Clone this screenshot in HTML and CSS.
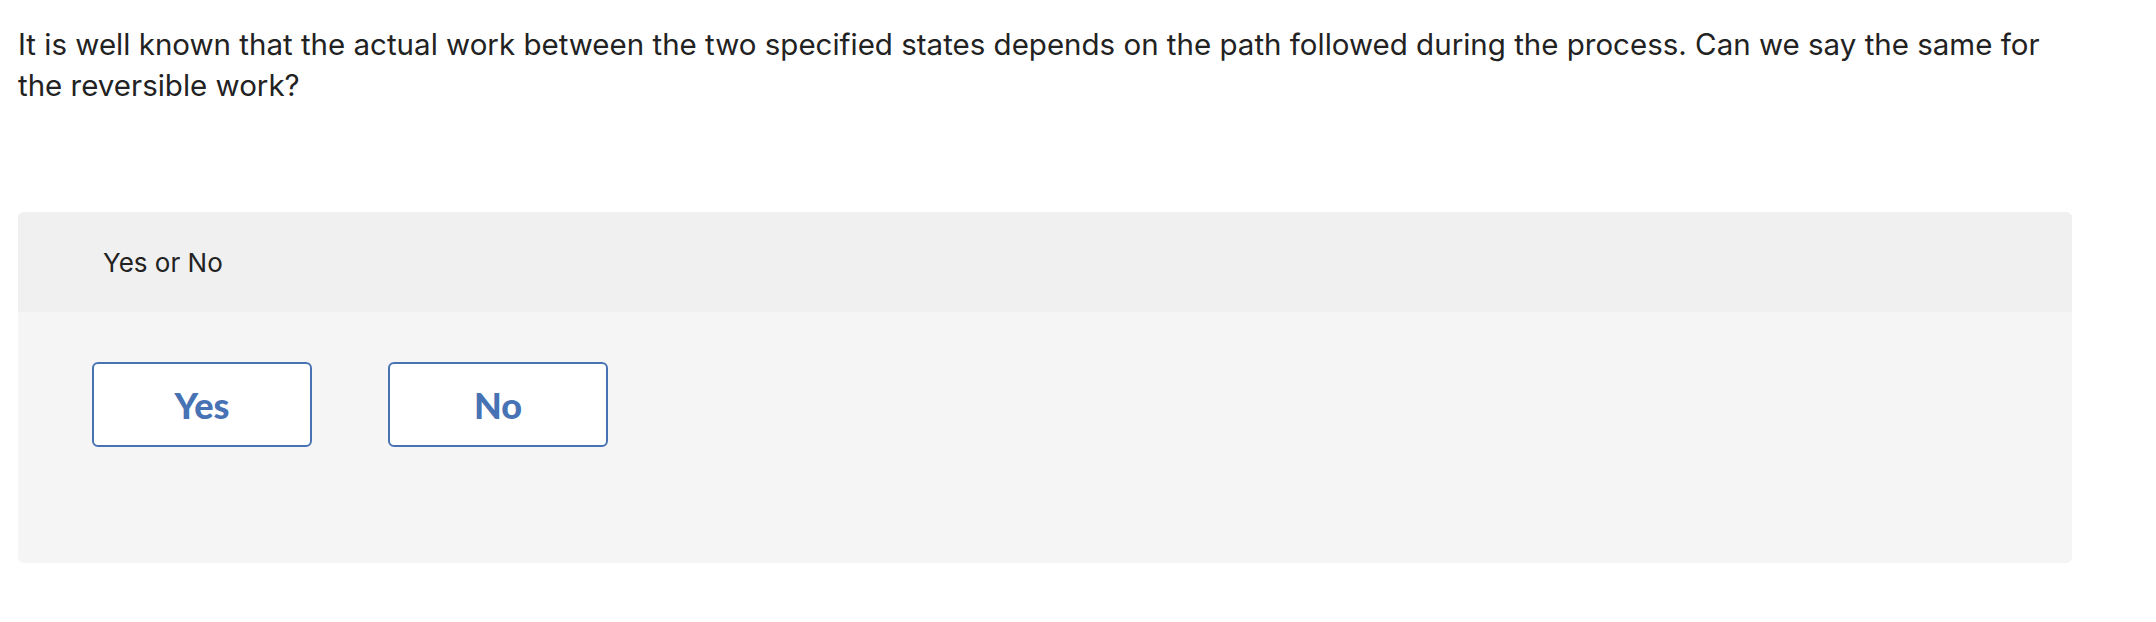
FILE: index.html
```html
<!DOCTYPE html>
<html>
<head>
  <meta name="viewport" content="width=device-width, initial-scale=1">
  <link rel="stylesheet" href="styles.css">
</head>
<body>

<div class="question">
  <p>It is well known that the actual work between the two specified states depends on the path followed during the process. Can we say the same for the reversible work?</p>
</div>

<div class="answer-box">
  <div class="answer-head">Yes or No</div>
  <div class="answer-body">
    <button class="choice-btn">Yes</button>
    <button class="choice-btn">No</button>
  </div>
</div>

</body>
</html>
```

FILE: styles.css
```css
body {
  font-family: Inter, Lato, sans-serif;
  margin: 0;
  padding: 24px 84px 0 18px;
  background-color: #fff;
  color: #222;
}

.question p {
  margin: 0;
  font-size: 29.5px;
  line-height: 41px;
}

.answer-box {
  margin-top: 106px;
  border-radius: 6px;
  overflow: hidden;
  background-color: #f5f5f5;
}

.answer-head {
  height: 100px;
  display: flex;
  align-items: center;
  padding-left: 85px;
  background-color: #f0f0f0;
  font-size: 26px;
}

.answer-body {
  display: flex;
  gap: 76px;
  padding: 50px 0 116px 74px;
}

.choice-btn {
  width: 220px;
  height: 85px;
  background-color: #fff;
  border: 2px solid #4773b5;
  border-radius: 6px;
  color: #4773b5;
  font-family: Lato, sans-serif;
  font-weight: 900;
  font-size: 36px;
  cursor: pointer;
}
```
